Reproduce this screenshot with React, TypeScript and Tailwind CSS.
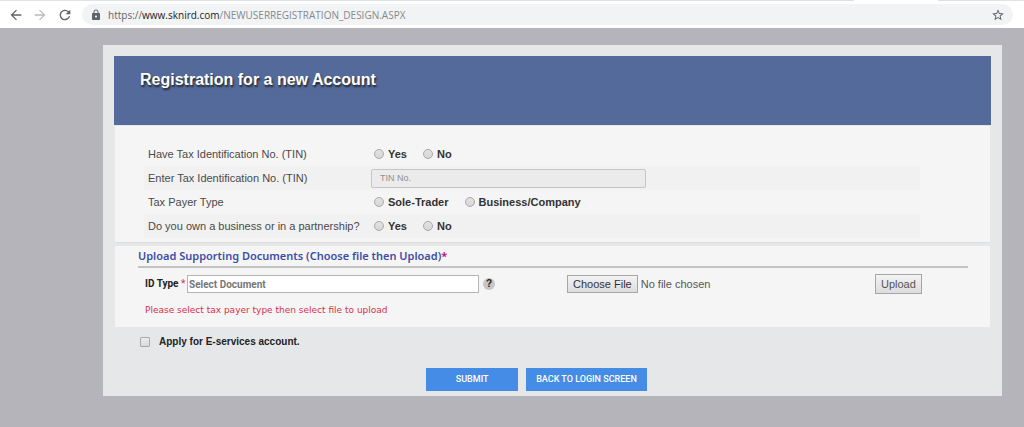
import type { ReactNode } from 'react';
import { MdArrowBack, MdArrowForward, MdLock, MdRefresh, MdStarBorder } from 'react-icons/md';

const RADIO_CLASS =
  'size-[10px] shrink-0 appearance-none rounded-full border border-[#a9a9a9] bg-linear-to-b from-[#e2e2e2] to-[#d6d6d6] checked:border-[3px] checked:border-[#555555]';

function BrowserBar(): ReactNode {
  return (
    <header className="bg-white text-[#5f6368]">
      {/* Bottom edge of the tab strip, open under the active tab */}
      <div className="flex h-px justify-end bg-[#dee1e6] pr-[86px]">
        <div className="w-[84px] bg-white" />
      </div>
      <div className="flex h-[27px] items-center pr-[11px] pl-2">
        <button type="button" aria-label="Back" className="mr-2">
          <MdArrowBack size={16} />
        </button>
        <button type="button" aria-label="Forward" className="mr-[9px] text-[#b9bbbe]">
          <MdArrowForward size={16} />
        </button>
        <button type="button" aria-label="Reload" className="mr-[9px]">
          <MdRefresh size={16} />
        </button>
        <div className="flex h-[21px] flex-1 items-center rounded-full bg-[#f1f3f4] px-2">
          <MdLock size={12} className="mr-[6px] shrink-0" />
          <span className="flex-1 font-['Open_Sans','Noto_Sans',sans-serif] text-[10px] leading-4 text-[#85898e]">
            <span className="text-[#5f6368]">https://</span>
            <span className="text-[#202124]">www.sknird.com</span>
            /NEWUSERREGISTRATION_DESIGN.ASPX
          </span>
          <button type="button" aria-label="Bookmark this page">
            <MdStarBorder size={14} />
          </button>
        </div>
      </div>
    </header>
  );
}

function Radio({ name, label }: { name: string; label: string }): ReactNode {
  return (
    <label className="flex items-center gap-1 font-bold text-[#333333]">
      <input type="radio" name={name} value={label} className={RADIO_CLASS} />
      {label}
    </label>
  );
}

function RadioRow({
  name,
  label,
  options,
  striped,
}: {
  name: string;
  label: string;
  options: string[];
  striped?: boolean;
}): ReactNode {
  return (
    <div
      role="radiogroup"
      aria-label={label}
      className={`flex h-6 items-center pl-1 ${striped ? 'bg-[#f1f1f1]' : ''}`}
    >
      <span className="w-[226px] shrink-0">{label}</span>
      <div className="flex gap-4">
        {options.map((option) => (
          <Radio key={option} name={name} label={option} />
        ))}
      </div>
    </div>
  );
}

function TaxPayerSection(): ReactNode {
  return (
    <section className="border-b border-[#dddddd] bg-[#f5f5f5] pt-4 pr-[70px] pb-1 pl-[29px] text-[11px] leading-4 text-[#4a4a4a]">
      <RadioRow name="hasTin" label="Have Tax Identification No. (TIN)" options={['Yes', 'No']} />
      <div className="flex h-6 items-center bg-[#f1f1f1] pl-1">
        <label htmlFor="tin" className="w-[223px] shrink-0">
          Enter Tax Identification No. (TIN)
        </label>
        <input
          id="tin"
          disabled
          placeholder="TIN No."
          className="h-[19px] w-[275px] rounded-xs border border-[#c6c6c6] bg-[#ebebeb] px-2 text-[9px] placeholder:text-[#8f8f8f]"
        />
      </div>
      <RadioRow name="payerType" label="Tax Payer Type" options={['Sole-Trader', 'Business/Company']} />
      <RadioRow
        name="partnership"
        label="Do you own a business or in a partnership?"
        options={['Yes', 'No']}
        striped
      />
    </section>
  );
}

function UploadSection(): ReactNode {
  return (
    <section className="mt-[3px] bg-[#f5f5f5] pt-[2px] pr-[22px] pb-[9px] pl-[23px]">
      <h2 className="border-b-2 border-[#c2c2c2] pb-[2px] font-['Noto_Sans',sans-serif] text-[11px] leading-4 font-semibold text-[#3d4da6]">
        Upload Supporting Documents (Choose file then Upload)
        <span className="font-bold text-[#c4157f]">*</span>
      </h2>
      <div className="flex items-center pt-[6px] pl-[7px] text-[11px] leading-4">
        <label htmlFor="idType" className="w-[42px] shrink-0 font-[Roboto,sans-serif] text-[10px] font-bold text-[#222222]">
          ID Type <span className="font-normal text-[#e0304a]">*</span>
        </label>
        <input
          id="idType"
          placeholder="Select Document"
          className="h-[18px] w-[292px] border border-[#b5b5b5] bg-white px-px font-[Roboto,sans-serif] text-[10px] font-bold placeholder:text-[#777777]"
        />
        <button
          type="button"
          aria-label="Help"
          className="ml-1 flex size-3 shrink-0 items-center justify-center rounded-full bg-[#c6c6c6] text-[10px] leading-3 font-bold text-[#222222]"
        >
          ?
        </button>
        <input
          type="file"
          aria-label="Supporting document"
          className="ml-[72px] w-[308px] text-[11px] text-[#555555] file:mr-[3px] file:h-[18px] file:border file:border-solid file:border-[#a6a6a6] file:bg-linear-to-b file:from-[#f3f3f3] file:to-[#dddddd] file:px-[5px] file:text-[11px] file:leading-4 file:text-[#333333]"
        />
        <button
          type="button"
          className="h-5 shrink-0 border border-[#a6a6a6] bg-linear-to-b from-[#f3f3f3] to-[#dddddd] px-[5px] text-[#555555]"
        >
          Upload
        </button>
      </div>
      <p className="pt-2 pl-[7px] font-['DejaVu_Sans',sans-serif] text-[9px] leading-4 text-[#d9304c]">
        Please select tax payer type then select file to upload
      </p>
    </section>
  );
}

export default function App(): ReactNode {
  return (
    <div className="min-h-screen bg-[#b4b4ba] font-['Liberation_Sans',Arial,sans-serif]">
      <BrowserBar />
      <main className="pt-[17px] pr-[22px] pb-[31px] pl-[103px]">
        <form className="bg-[#e6e7e9] px-3 pt-[11px] pb-[5px]" onSubmit={(e) => e.preventDefault()}>
          <div className="-mx-px mb-px h-[69px] bg-[#536a9b] px-[26px] pt-3">
            <h1 className="text-base leading-6 font-bold text-white [text-shadow:1px_2px_2px_#222222]">
              Registration for a new Account
            </h1>
          </div>
          <TaxPayerSection />
          <UploadSection />
          <label className="mt-[7px] flex items-center gap-[9px] pl-[25px] text-[10px] leading-4 font-bold text-[#222222]">
            <input
              type="checkbox"
              className="size-[10px] appearance-none rounded-[1px] border border-[#a9a9a9] bg-linear-to-b from-[#ececec] to-[#dadada] checked:bg-[#555555]"
            />
            Apply for E-services account.
          </label>
          <div className="mt-[18px] flex justify-center gap-2 pr-8 font-[Roboto,sans-serif] text-[9px] font-medium text-white">
            <button type="submit" className="h-[23px] w-[92px] bg-[#448ce6]">
              SUBMIT
            </button>
            <button type="button" className="h-[23px] bg-[#448ce6] px-[10px]">
              BACK TO LOGIN SCREEN
            </button>
          </div>
        </form>
      </main>
    </div>
  );
}
